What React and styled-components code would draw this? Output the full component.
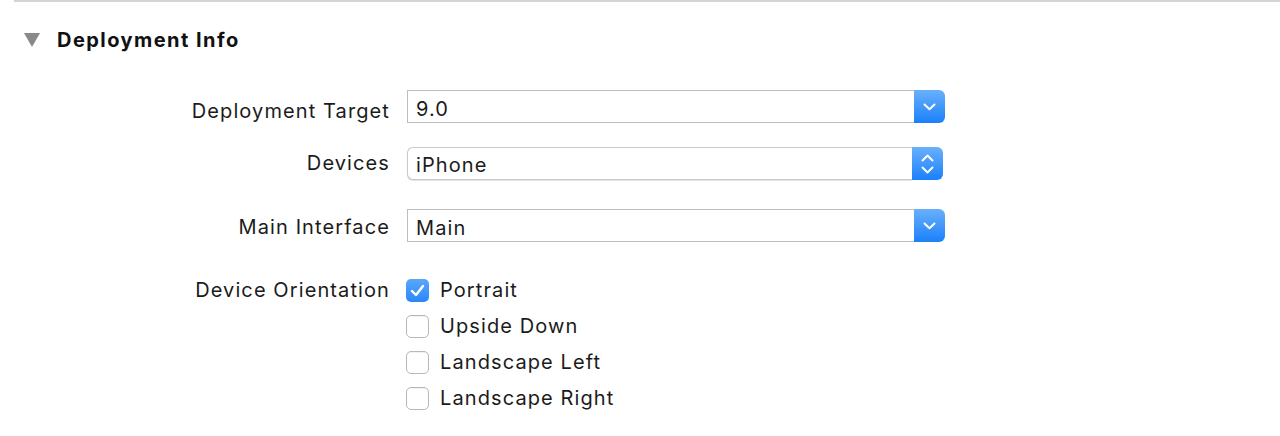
import React from 'react'
import styled, { createGlobalStyle } from 'styled-components'

const GlobalStyle = createGlobalStyle`
  html, body {
    margin: 0;
    padding: 0;
    background: #ffffff;
    font-family: Inter, "Liberation Sans", Arial, sans-serif;
    color: #1b1b1b;
  }
`

const Page = styled.div`
  width: 1280px;
  height: 436px;
  overflow: hidden;
  background: #fff;
`

const TopRule = styled.div`
  height: 2px;
  margin-left: 14px;
  background: #d4d4d4;
`

const Header = styled.div`
  display: flex;
  align-items: center;
  gap: 17px;
  padding: 24px 0 0 24px;
  height: 28px;
`

const Title = styled.h2`
  margin: 0;
  font-size: 20px;
  font-weight: 700;
  color: #111;
  letter-spacing: 1.45px;
`

const Form = styled.div`
  display: grid;
  grid-template-columns: 389px 538px;
  column-gap: 18px;
  margin-top: 36px;
`

const Label = styled.div`
  text-align: right;
  font-size: 20px;
  letter-spacing: 1.1px;
  line-height: 33px;
  height: 33px;
  margin-top: ${p => p.$top || 0}px;
  margin-right: -1px;
  padding-top: ${p => p.$shift || 0}px;
  box-sizing: border-box;
  color: #1b1b1b;
  white-space: nowrap;
`

const Control = styled.div`
  margin-top: ${p => p.$top || 0}px;
`

const Combo = styled.div`
  display: flex;
  height: 33px;
  width: ${p => p.$width || 538}px;
  box-sizing: border-box;
`

const Field = styled.div`
  flex: 1;
  border: 1px solid ${p => (p.$round ? '#c9c9c9' : '#bdbdbd')};
  border-right: none;
  border-radius: ${p => (p.$round ? '6px 0 0 6px' : '0')};
  box-shadow: ${p => (p.$round ? '0 1px 1px rgba(0,0,0,0.12)' : 'none')};
  padding: ${p => (p.$round ? 3 : 5)}px 0 0 8px;
  font-size: 20px;
  letter-spacing: 1.1px;
  color: #1b1b1b;
  background: #fff;
  box-sizing: border-box;
  display: flex;
  align-items: center;
`

const BlueButton = styled.div`
  width: 31px;
  height: 33px;
  border-radius: 0 6px 6px 0;
  background: linear-gradient(#69b0fb, #1b80fb);
  display: flex;
  align-items: center;
  justify-content: center;
  box-sizing: border-box;
`

const Checks = styled.div`
  display: flex;
  flex-direction: column;
  gap: 13px;
  margin-top: 5px;
  margin-left: -1px;
`

const CheckRow = styled.label`
  display: flex;
  align-items: center;
  gap: 11px;
  font-size: 20px;
  letter-spacing: 1.1px;
  height: 23px;
  line-height: 23px;
  color: #1b1b1b;
`

const Box = styled.span`
  width: 23px;
  height: 23px;
  flex: none;
  box-sizing: border-box;
  border-radius: 5px;
  display: flex;
  align-items: center;
  justify-content: center;
  background: ${p => (p.$checked ? 'linear-gradient(#5aa7fb, #2a87fb)' : '#fff')};
  border: ${p => (p.$checked ? 'none' : '1px solid #b8b8b8')};
  box-shadow: ${p => (p.$checked ? 'none' : 'inset 0 1px 1px rgba(0,0,0,0.06)')};
`

const Triangle = () => (
  <svg width="16" height="14" viewBox="0 0 16 14">
    <path d="M0 0 H16 L8 14 Z" fill="#8a8a8a" />
  </svg>
)

const Chevron = () => (
  <svg width="13" height="8" viewBox="0 0 13 8">
    <path d="M1.5 1.5 L6.5 6.3 L11.5 1.5" fill="none" stroke="#fff" strokeWidth="2" strokeLinecap="round" strokeLinejoin="round" />
  </svg>
)

const Stepper = () => (
  <svg width="13" height="22" viewBox="0 0 13 22">
    <path d="M1.5 7.5 L6.5 2.5 L11.5 7.5" fill="none" stroke="#fff" strokeWidth="2" strokeLinecap="round" strokeLinejoin="round" />
    <path d="M1.5 14.5 L6.5 19.5 L11.5 14.5" fill="none" stroke="#fff" strokeWidth="2" strokeLinecap="round" strokeLinejoin="round" />
  </svg>
)

const Tick = () => (
  <svg width="15" height="13" viewBox="0 0 15 13">
    <path d="M2 7 L6 11 L13 2" fill="none" stroke="#fff" strokeWidth="2.4" strokeLinecap="round" strokeLinejoin="round" />
  </svg>
)

const orientations = [
  { name: 'Portrait', checked: true },
  { name: 'Upside Down', checked: false },
  { name: 'Landscape Left', checked: false },
  { name: 'Landscape Right', checked: false },
]

function App() {
  return (
    <Page>
      <GlobalStyle />
      <TopRule />
      <Header>
        <Triangle />
        <Title>Deployment Info</Title>
      </Header>
      <Form>
        <Label $shift={5}>Deployment Target</Label>
        <Control>
          <Combo>
            <Field>9.0</Field>
            <BlueButton><Chevron /></BlueButton>
          </Combo>
        </Control>

        <Label $top={24}>Devices</Label>
        <Control $top={24}>
          <Combo $width={536}>
            <Field $round>iPhone</Field>
            <BlueButton><Stepper /></BlueButton>
          </Combo>
        </Control>

        <Label $top={29} $shift={2}>Main Interface</Label>
        <Control $top={29}>
          <Combo>
            <Field>Main</Field>
            <BlueButton><Chevron /></BlueButton>
          </Combo>
        </Control>

        <Label $top={32}>Device Orientation</Label>
        <Control $top={32}>
          <Checks>
            {orientations.map(o => (
              <CheckRow key={o.name}>
                <Box $checked={o.checked}>{o.checked && <Tick />}</Box>
                {o.name}
              </CheckRow>
            ))}
          </Checks>
        </Control>
      </Form>
    </Page>
  )
}

export default App
